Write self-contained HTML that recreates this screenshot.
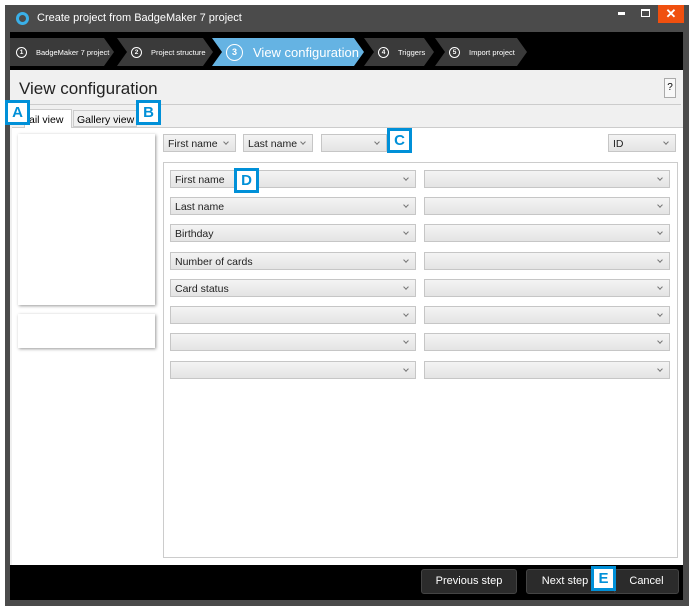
<!DOCTYPE html><html><head><style>
*{margin:0;padding:0;box-sizing:border-box}
body{width:695px;height:610px;background:#fff;font-family:"Liberation Sans",sans-serif;position:relative;overflow:hidden}
.a{position:absolute;white-space:nowrap}
.cb{position:absolute;height:18px;background:linear-gradient(#f4f4f4,#e4e4e4);border:1px solid #c6c6c6;font-size:10.5px;color:#222;padding:3px 0 0 4px;white-space:nowrap}
.cb:after{content:"";position:absolute;right:7px;top:5px;width:3px;height:3px;border-right:1px solid #777;border-bottom:1px solid #777;transform:rotate(45deg)}
.st{position:absolute;top:38px;height:28px;background:#3a3a3a;color:#fff;font-size:7.5px;clip-path:polygon(0 0,calc(100% - 10px) 0,100% 50%,calc(100% - 10px) 100%,0 100%,10px 50%);display:flex;align-items:center;padding-left:14px;white-space:nowrap}
.st i{font-style:normal;display:flex;align-items:center;justify-content:center;width:11px;height:11px;border:1.5px solid #fff;border-radius:50%;font-size:6.5px;font-weight:bold;margin-right:9px;flex:none}
.lab{position:absolute;width:25px;height:25px;border:3px solid #0090d8;background:#fff;color:#0090d8;font-weight:bold;font-size:15px;text-align:center;line-height:19px}
.btn{position:absolute;top:569px;height:25px;background:#2b2b2b;border:1px solid #444;border-radius:3px;color:#fff;font-size:11px;text-align:center;line-height:23px}
</style></head><body>
<div class="a" style="left:5px;top:5px;width:684px;height:601px;background:#4b4b4b"></div>
<div class="a" style="left:16px;top:12px;width:13px;height:13px;border:3px solid #3ab0e8;border-radius:50%"></div>
<div class="a" style="left:37px;top:12px;color:#fff;font-size:11px">Create project from BadgeMaker 7 project</div>
<div class="a" style="left:618px;top:12px;width:7px;height:3px;background:#fff"></div>
<div class="a" style="left:641px;top:9px;width:9px;height:8px;border:1.5px solid #fff;border-top-width:2.5px"></div>
<div class="a" style="left:658px;top:5px;width:26px;height:18px;background:#f0500f;color:#fff;font-weight:bold;font-size:13px;text-align:center;line-height:18px">✕</div>
<div class="a" style="left:10px;top:32px;width:673px;height:38px;background:#000"></div>
<div class="st" style="left:10px;width:104px;padding-left:6px;clip-path:polygon(0 0,calc(100% - 10px) 0,100% 50%,calc(100% - 10px) 100%,0 100%)"><i>1</i>BadgeMaker 7 project</div>
<div class="st" style="left:117px;width:96px"><i>2</i>Project structure</div>
<div class="st" style="left:212px;width:152px;background:#65b3e3;font-size:13px"><i style="width:17px;height:17px;font-size:9px;margin-right:10px">3</i>View configuration</div>
<div class="st" style="left:364px;width:70px"><i>4</i>Triggers</div>
<div class="st" style="left:435px;width:92px"><i>5</i>Import project</div>
<div class="a" style="left:10px;top:70px;width:673px;height:495px;background:#f0f0f0"></div>
<div class="a" style="left:19px;top:79px;font-size:17px;color:#222">View configuration</div>
<div class="a" style="left:664px;top:78px;width:12px;height:20px;border:1px solid #aaa;background:#f8f8f8;font-size:10px;text-align:center;line-height:18px">?</div>
<div class="a" style="left:12px;top:104px;width:669px;height:1px;background:#ccc"></div>
<div class="a" style="left:12px;top:127px;width:671px;height:438px;background:#fff;border-top:1px solid #ccc"></div>
<div class="a" style="left:24px;top:109px;width:48px;height:19px;background:#fff;border:1px solid #ccc;border-bottom:none;font-size:10.5px;padding:4px 0 0 4px">ail view</div>
<div class="a" style="left:73px;top:110px;width:64px;height:17px;background:#f0f0f0;border:1px solid #ccc;font-size:10.5px;padding:3px 0 0 3px;overflow:hidden">Gallery view</div>
<div class="a" style="left:18px;top:134px;width:137px;height:171px;background:#fff;box-shadow:1px 1px 3px #999"></div>
<div class="a" style="left:18px;top:314px;width:137px;height:34px;background:#fff;box-shadow:1px 1px 3px #999"></div>
<div class="cb" style="left:163px;top:134px;width:73px">First name</div>
<div class="cb" style="left:243px;top:134px;width:70px">Last name</div>
<div class="cb" style="left:321px;top:134px;width:66px"></div>
<div class="cb" style="left:608px;top:134px;width:68px">ID</div>
<div class="a" style="left:163px;top:162px;width:515px;height:396px;border:1px solid #ccc;background:#fff"></div>
<div class="cb" style="left:170px;top:170px;width:246px">First name</div>
<div class="cb" style="left:170px;top:197px;width:246px">Last name</div>
<div class="cb" style="left:170px;top:224px;width:246px">Birthday</div>
<div class="cb" style="left:170px;top:252px;width:246px">Number of cards</div>
<div class="cb" style="left:170px;top:279px;width:246px">Card status</div>
<div class="cb" style="left:170px;top:306px;width:246px"></div>
<div class="cb" style="left:170px;top:333px;width:246px"></div>
<div class="cb" style="left:170px;top:361px;width:246px"></div>
<div class="cb" style="left:424px;top:170px;width:246px"></div>
<div class="cb" style="left:424px;top:197px;width:246px"></div>
<div class="cb" style="left:424px;top:224px;width:246px"></div>
<div class="cb" style="left:424px;top:252px;width:246px"></div>
<div class="cb" style="left:424px;top:279px;width:246px"></div>
<div class="cb" style="left:424px;top:306px;width:246px"></div>
<div class="cb" style="left:424px;top:333px;width:246px"></div>
<div class="cb" style="left:424px;top:361px;width:246px"></div>
<div class="a" style="left:10px;top:565px;width:673px;height:35px;background:#000"></div>
<div class="btn" style="left:421px;width:96px">Previous step</div>
<div class="btn" style="left:526px;width:92px;padding-right:14px">Next step</div>
<div class="btn" style="left:614px;width:65px">Cancel</div>
<div class="lab" style="left:5px;top:100px">A</div>
<div class="lab" style="left:136px;top:100px">B</div>
<div class="lab" style="left:387px;top:128px">C</div>
<div class="lab" style="left:234px;top:168px">D</div>
<div class="lab" style="left:591px;top:566px">E</div>
</body></html>
